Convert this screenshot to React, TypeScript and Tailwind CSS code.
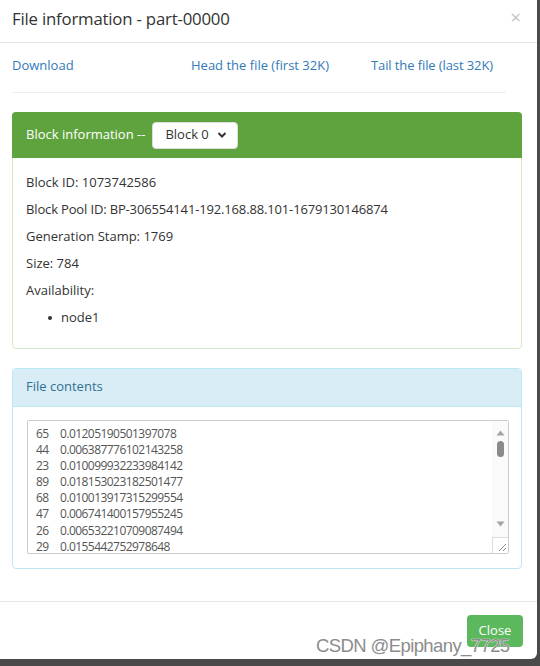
import React from "react";

const lines: [string, string][] = [
  ["65", "0.01205190501397078"],
  ["44", "0.006387776102143258"],
  ["23", "0.010099932233984142"],
  ["89", "0.018153023182501477"],
  ["68", "0.010013917315299554"],
  ["47", "0.006741400157955245"],
  ["26", "0.006532210709087494"],
  ["29", "0.0155442752978648"],
];

export default function App() {
  const font = { fontFamily: "'Open Sans', 'Noto Sans', Arial, sans-serif" };
  return (
    <div className="relative w-[540px] h-[666px] overflow-hidden bg-[#4a4a4a]" style={font}>
      <div className="w-[537px] h-[659px] bg-white rounded-br-[6px] flex flex-col text-[#333]">
        {/* header */}
        <div className="h-[43px] border-b border-[#e5e5e5] pl-[12px] pr-[16px] pb-[5px] flex items-center justify-between">
          <div className="text-[16.8px] text-[#333] tracking-[-0.2px]">File information - part-00000</div>
          <div className="text-[19px] leading-none text-[#c4c4c4] mt-[-3px]">×</div>
        </div>
        {/* body */}
        <div className="px-[12px] pt-[12px] flex-1">
          <div className="grid grid-cols-3 gap-x-[30px] text-[13px] leading-[20px] text-[#337ab7]">
            <div>Download</div>
            <div className="-ml-[2px]">Head the file (first 32K)</div>
            <div className="-ml-[3px] tracking-[-0.1px]">Tail the file (last 32K)</div>
          </div>
          <div className="w-[494px] border-t border-[#eee] mt-[17px]" />
          <div className="mt-[19px] w-[510px] border border-[#d6e9c6] rounded-[4px]">
            <div className="h-[46px] bg-[#5fa33e] -mt-px -mx-px rounded-t-[4px] flex items-center pl-[14px] text-white text-[13px]">
              <span>Block information --</span>
              <div className="ml-[7px] w-[86px] h-[27px] bg-white rounded-[4px] border border-[#ddd] flex items-center justify-between pl-[12px] pr-[10px] text-[#333] text-[13px]">
                <span>Block 0</span>
                <svg width="10" height="8" viewBox="0 0 10 8">
                  <path d="M1.5 2 L5 5.5 L8.5 2" stroke="#333" strokeWidth="2" fill="none" />
                </svg>
              </div>
            </div>
            <div className="pl-[13px] pt-[11px] pb-[16px] text-[13px] leading-[27.1px] text-[#333]">
              <div>Block ID: 1073742586</div>
              <div className="tracking-[-0.15px]">Block Pool ID: BP-306554141-192.168.88.101-1679130146874</div>
              <div>Generation Stamp: 1769</div>
              <div>Size: 784</div>
              <div>Availability:</div>
              <div className="flex items-center pl-[22px]">
                <span className="w-[4px] h-[4px] rounded-full bg-[#333] mr-[9px]" />
                <span>node1</span>
              </div>
            </div>
          </div>
          <div className="mt-[19px] w-[510px] border border-[#bce8f1] rounded-[4px]">
            <div className="h-[38px] bg-[#d9edf7] border-b border-[#bce8f1] rounded-t-[3px] flex items-center pl-[13px] text-[#31708f] text-[13px]">
              File contents
            </div>
            <div className="pl-[14px] pt-[13px] pb-[14px]">
              <div className="w-[482px] h-[134px] border border-[#ccc] rounded-[2px] flex overflow-hidden">
                <div className="flex-1 pl-[8px] pt-[5px] text-[12px] tracking-[-0.55px] leading-[16.15px] text-[#555] overflow-hidden">
                  {lines.map(([a, b]) => (
                    <div key={a} className="flex whitespace-nowrap">
                      <span className="w-[24px]">{a}</span>
                      <span>{b}</span>
                    </div>
                  ))}
                </div>
                <div className="w-[16px] bg-[#fafafa] flex flex-col items-center">
                  <svg width="9" height="6" viewBox="0 0 9 6" className="mt-[9px]">
                    <path d="M4.5 0.5 L8.5 5.5 L0.5 5.5 Z" fill="#a3a3a3" />
                  </svg>
                  <div className="mt-[5px] w-[7px] h-[16px] rounded-full bg-[#8a8a8a]" />
                  <svg width="9" height="6" viewBox="0 0 9 6" className="mt-[64px]">
                    <path d="M0.5 0.5 L8.5 0.5 L4.5 5.5 Z" fill="#a3a3a3" />
                  </svg>
                  <div className="mt-auto w-[16px] h-[16px] border-t border-l border-[#ddd] bg-white relative">
                    <svg width="14" height="14" viewBox="0 0 14 14" className="absolute right-0 bottom-0">
                      <path d="M12 5 L5 12 M12 9 L9 12" stroke="#888" strokeWidth="1" />
                    </svg>
                  </div>
                </div>
              </div>
            </div>
          </div>
        </div>
        {/* footer */}
        <div className="h-[58px] border-t border-[#e5e5e5] flex justify-end items-start pt-[13px] pr-[14px]">
          <div className="w-[56px] h-[32px] bg-[#5cb85c] rounded-[4px] text-white text-[13px] flex items-center justify-center">
            Close
          </div>
        </div>
      </div>
      <div
        className="absolute left-[316px] top-[637px] whitespace-nowrap text-[18.5px] tracking-[-0.6px] leading-none text-[#8c8c8c]"
        style={{ fontFamily: "'Liberation Sans', Arial, sans-serif", textShadow: "0 0 1px #fff, 0 0 1px #fff" }}
      >
        CSDN @Epiphany_7725
      </div>
    </div>
  );
}
